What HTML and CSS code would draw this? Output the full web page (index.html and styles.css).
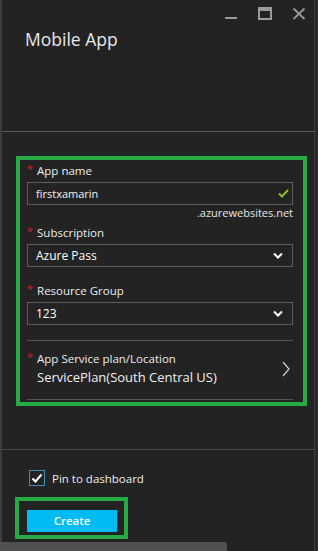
FILE: index.html
```html
<!DOCTYPE html>
<html lang="en">
<head>
    <meta charset="UTF-8">
    <meta name="viewport" content="width=device-width, initial-scale=1.0">
    <title>Mobile App</title>
    <link rel="stylesheet" href="styles.css">
</head>
<body>
    <div class="blade">
        <header class="blade-header">
            <div class="window-controls">
                <svg class="control" width="14" height="14" viewBox="0 0 14 14">
                    <path d="M1 11h12" stroke="#9a9a9a" stroke-width="2"/>
                </svg>
                <svg class="control" width="14" height="14" viewBox="0 0 14 14">
                    <rect x="1" y="1" width="12" height="11" fill="none" stroke="#9a9a9a" stroke-width="2"/>
                    <path d="M1 3h12" stroke="#9a9a9a" stroke-width="2"/>
                </svg>
                <svg class="control" width="14" height="14" viewBox="0 0 14 14">
                    <path d="M1.5 1.5l11 10.5M12.5 1.5l-11 10.5" stroke="#9a9a9a" stroke-width="1.8"/>
                </svg>
            </div>
            <h1>Mobile App</h1>
        </header>

        <section class="blade-content">
            <div class="highlight form-box">
                <label class="field-label"><span class="req">*</span>App name</label>
                <div class="input">
                    <span>firstxamarin</span>
                    <svg width="11" height="9" viewBox="0 0 11 9">
                        <path d="M1 4.5l3 3 6-6.5" fill="none" stroke="#8cbf26" stroke-width="2"/>
                    </svg>
                </div>
                <div class="suffix">.azurewebsites.net</div>

                <label class="field-label"><span class="req">*</span>Subscription</label>
                <div class="input select">
                    <span>Azure Pass</span>
                    <svg width="10" height="7" viewBox="0 0 10 7">
                        <path d="M1 1.5l4 4 4-4" fill="none" stroke="#ffffff" stroke-width="2"/>
                    </svg>
                </div>

                <label class="field-label spaced"><span class="req">*</span>Resource Group</label>
                <div class="input select">
                    <span>123</span>
                    <svg width="10" height="7" viewBox="0 0 10 7">
                        <path d="M1 1.5l4 4 4-4" fill="none" stroke="#ffffff" stroke-width="2"/>
                    </svg>
                </div>

                <div class="divider divider-top"></div>

                <div class="nav-row">
                    <div>
                        <div class="field-label"><span class="req">*</span>App Service plan/Location</div>
                        <div class="nav-value">ServicePlan(South Central US)</div>
                    </div>
                    <svg width="8" height="16" viewBox="0 0 8 16">
                        <path d="M1 1l6 7-6 7" fill="none" stroke="#d0d0d0" stroke-width="1.2"/>
                    </svg>
                </div>

                <div class="divider"></div>
            </div>
        </section>

        <footer class="blade-footer">
            <label class="checkbox-row">
                <span class="checkbox">
                    <svg width="12" height="11" viewBox="0 0 12 11">
                        <path d="M1.5 5.5l3 3 6-7" fill="none" stroke="#ffffff" stroke-width="2"/>
                    </svg>
                </span>
                Pin to dashboard
            </label>
            <div class="highlight create-box">
                <button class="create-btn">Create</button>
            </div>
        </footer>
    </div>
    <div class="scrollbar"></div>
</body>
</html>
```

FILE: styles.css
```css
body {
    margin: 0;
    background-color: #2a2a2a;
    font-family: 'Open Sans', 'Noto Sans', sans-serif;
    color: #e6e6e6;
    height: 551px;
    overflow: hidden;
}
.blade {
    width: 312px;
    height: 551px;
    background-color: #232323;
    border-left: 2px solid #3c3c3c;
    border-right: 1px solid #3c3c3c;
    display: flex;
    flex-direction: column;
}
.blade-header {
    box-sizing: border-box;
    height: 132px;
    border-bottom: 1px solid #5a5a5a;
    padding: 7px 0 0 23px;
}
.window-controls {
    display: flex;
    justify-content: flex-end;
    gap: 20px;
    padding-right: 8px;
}
h1 {
    margin: 6px 0 0 0;
    font-size: 17.5px;
    font-weight: 400;
    color: #e8e8e8;
}
.blade-content {
    box-sizing: border-box;
    height: 318px;
    padding: 24px 0 0 14px;
    border-bottom: 1px solid #4e4e4e;
}
.highlight {
    border: 4px solid #27aa46;
}
.form-box {
    box-sizing: border-box;
    width: 291px;
    padding: 2px 10px 2px 7px;
    display: flex;
    flex-direction: column;
}
.field-label {
    display: block;
    font-size: 11.5px;
    line-height: 18px;
    color: #ececec;
}
.field-label.spaced {
    margin-top: 15px;
}
.req {
    position: relative;
    top: -2px;
    color: #c8252c;
    font-size: 11px;
    margin-right: 4px;
}
.input {
    margin-top: 2px;
    height: 23px;
    box-sizing: border-box;
    border: 1px solid #5e5e5e;
    padding: 0 3px 0 8px;
    display: flex;
    align-items: center;
    justify-content: space-between;
    font-size: 11px;
    color: #f2f2f2;
}
.select {
    padding-right: 9px;
}
.select span {
    font-size: 12px;
    color: #ffffff;
}
.suffix {
    text-align: right;
    font-size: 11px;
    line-height: 16px;
    margin-bottom: 3px;
    color: #e6e6e6;
}
.divider {
    height: 1px;
    background-color: #555555;
}
.divider-top {
    margin-top: 15px;
}
.nav-row {
    display: flex;
    align-items: center;
    justify-content: space-between;
    padding: 9px 3px 12px 0;
}
.nav-value {
    margin-left: 10px;
    font-size: 13px;
    line-height: 19px;
    color: #f0f0f0;
}
.blade-footer {
    padding: 20px 0 0 13px;
}
.checkbox-row {
    display: flex;
    align-items: center;
    gap: 7px;
    margin-left: 14px;
    font-size: 11.5px;
    color: #ececec;
}
.checkbox {
    width: 16px;
    height: 16px;
    box-sizing: border-box;
    border: 1px solid #3f8fb8;
    display: flex;
    align-items: center;
    justify-content: center;
}
.create-box {
    margin-top: 11px;
    width: 113px;
    height: 42px;
    box-sizing: border-box;
    padding: 7px 0 0 8px;
}
.create-btn {
    width: 90px;
    height: 22px;
    border: none;
    background-color: #00bcf2;
    color: #ffffff;
    font-family: inherit;
    font-size: 11.5px;
    font-weight: 600;
    padding: 0;
}
.scrollbar {
    position: absolute;
    left: 0;
    top: 542px;
    width: 227px;
    height: 9px;
    background-color: #505050;
    border-top-right-radius: 3px;
}
```
